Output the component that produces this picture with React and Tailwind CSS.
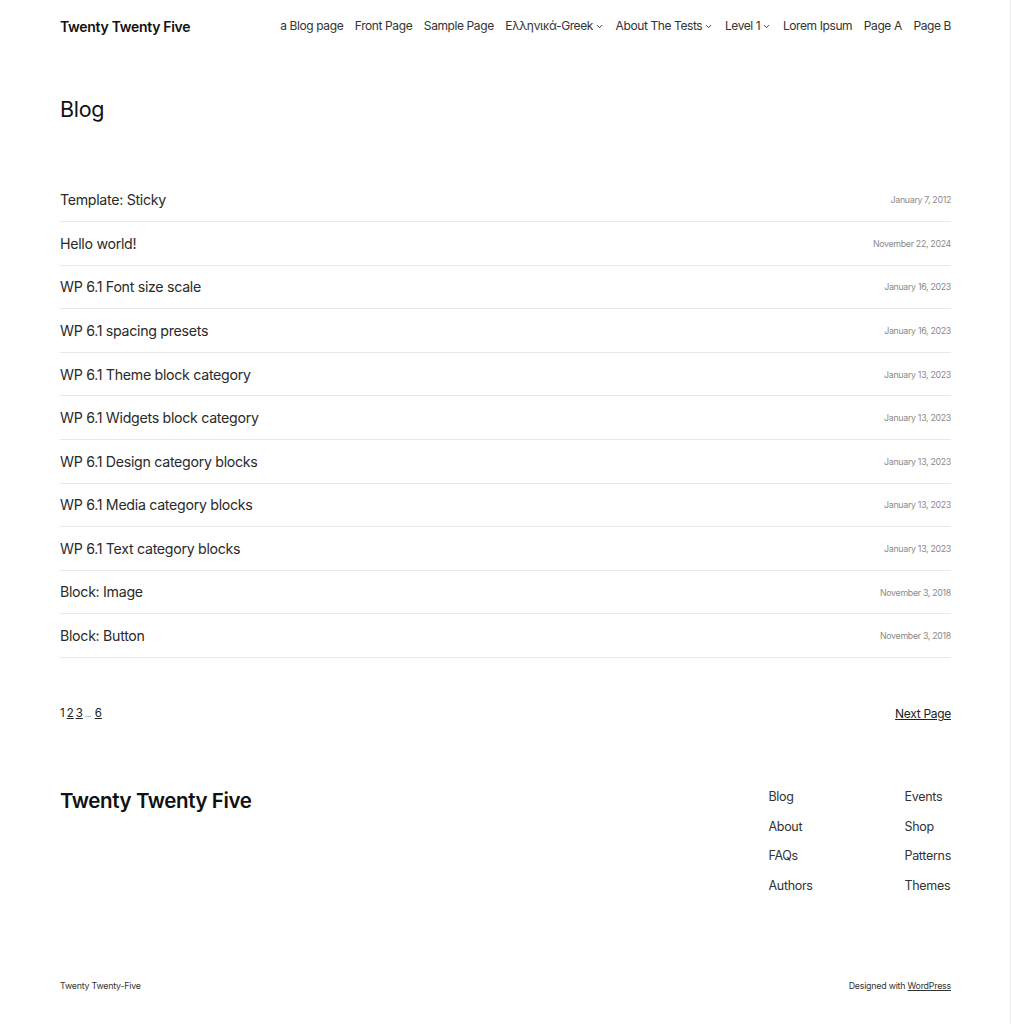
import { ChevronDown } from "lucide-react";

const nav = [
  { label: "a Blog page" },
  { label: "Front Page" },
  { label: "Sample Page" },
  { label: "Ελληνικά-Greek", sub: true },
  { label: "About The Tests", sub: true },
  { label: "Level 1", sub: true },
  { label: "Lorem Ipsum" },
  { label: "Page A" },
  { label: "Page B" },
];

const posts = [
  ["Template: Sticky", "January 7, 2012"],
  ["Hello world!", "November 22, 2024"],
  ["WP 6.1 Font size scale", "January 16, 2023"],
  ["WP 6.1 spacing presets", "January 16, 2023"],
  ["WP 6.1 Theme block category", "January 13, 2023"],
  ["WP 6.1 Widgets block category", "January 13, 2023"],
  ["WP 6.1 Design category blocks", "January 13, 2023"],
  ["WP 6.1 Media category blocks", "January 13, 2023"],
  ["WP 6.1 Text category blocks", "January 13, 2023"],
  ["Block: Image", "November 3, 2018"],
  ["Block: Button", "November 3, 2018"],
];

export default function App() {
  return (
    <div className="min-h-[1024px] bg-white border-r border-[#ececec] font-['Inter',sans-serif] text-[#111]">
      <div className="pl-[60px] pr-[59px]">
        {/* Header */}
        <header className="h-[52px] flex items-center justify-between">
          <a className="text-[14px] font-semibold tracking-[-0.3px] text-[#111]">Twenty Twenty Five</a>
          <nav className="flex items-center gap-[11.6px] text-[12px] text-[#333] tracking-[-0.4px]">
            {nav.map((n) => (
              <span key={n.label} className="flex items-center gap-[2px]">
                {n.label}
                {n.sub && <ChevronDown className="w-[9px] h-[9px]" strokeWidth={2.5} />}
              </span>
            ))}
          </nav>
        </header>

        {/* Title */}
        <h1 className="mt-[41px] text-[21.5px] leading-[32px] font-normal tracking-[-0.3px] text-[#111]">Blog</h1>

        {/* Posts */}
        <ul className="mt-[53.5px]">
          {posts.map(([title, date]) => (
            <li key={title} className="h-[43.6px] flex items-center justify-between border-b border-[#e9e9e9]">
              <span className="text-[14.2px] text-[#2a2a2a] tracking-[-0.3px]">{title}</span>
              <span className="text-[8.8px] text-[#8a8a8a] tracking-[-0.3px]">{date}</span>
            </li>
          ))}
        </ul>

        {/* Pagination */}
        <div className="mt-[48px] h-[16px] flex items-center justify-between text-[11.5px] text-[#222]">
          <div className="flex items-center gap-[2px]">
            <span>1</span>
            <a className="underline">2</a>
            <a className="underline">3</a>
            <span className="text-[8px] text-[#666]">…</span>
            <a className="underline ml-[1px]">6</a>
          </div>
          <a className="underline text-[12px] tracking-[-0.3px]">Next Page</a>
        </div>

        {/* Footer */}
        <footer className="mt-[65px] flex items-start justify-between">
          <div className="text-[20.5px] leading-[28px] font-semibold tracking-[-0.4px] text-[#111]">Twenty Twenty Five</div>
          <div className="flex">
            <ul className="w-[136px] flex flex-col gap-[9.5px] text-[12.5px] leading-[20px] text-[#333] tracking-[-0.3px]">
              <li>Blog</li>
              <li>About</li>
              <li>FAQs</li>
              <li>Authors</li>
            </ul>
            <ul className="flex flex-col gap-[9.5px] text-[12.5px] leading-[20px] text-[#333] tracking-[-0.3px]">
              <li>Events</li>
              <li>Shop</li>
              <li>Patterns</li>
              <li>Themes</li>
            </ul>
          </div>
        </footer>

        <div className="mt-[83.5px] h-[14px] flex items-center justify-between text-[8.8px] text-[#333] tracking-[-0.2px]">
          <span>Twenty Twenty-Five</span>
          <span>
            Designed with <a className="underline">WordPress</a>
          </span>
        </div>
      </div>
    </div>
  );
}
